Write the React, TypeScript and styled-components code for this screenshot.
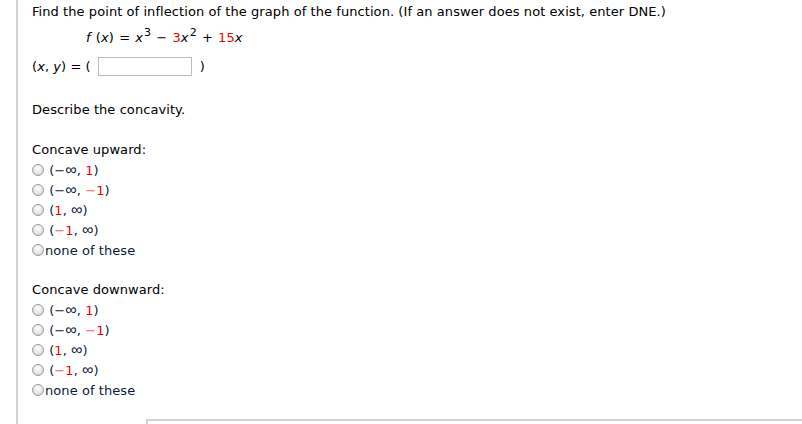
import styled, { createGlobalStyle } from "styled-components";

const Global = createGlobalStyle`
  body {
    margin: 0;
    background: #fff;
    font-family: "DejaVu Sans", Verdana, sans-serif;
    font-size: 13px;
    letter-spacing: 0.07px;
    color: #000;
  }
`;

const Page = styled.div`
  margin-left: 16px;
  border-left: 2px solid #d4d4d4;
  height: 424px;
  padding-left: 14px;
  position: relative;
  overflow: hidden;
`;

const Line = styled.div<{ $top?: number }>`
  line-height: 20px;
  padding-top: ${(p) => p.$top ?? 0}px;
  white-space: nowrap;
`;

const Formula = styled.div`
  padding-left: 54px;
  padding-top: 6px;
  line-height: 20px;
  word-spacing: 1px;
`;

const I = styled.i`
  font-style: italic;
`;

const Red = styled.span<{ $light?: boolean }>`
  color: ${(p) => (p.$light ? "#f06666" : "#e00")};
`;

const Sup = styled.sup`
  font-size: 11px;
  vertical-align: 6px;
  line-height: 0;
  margin-left: 1px;
`;

const AnswerRow = styled.div`
  margin-top: 9px;
  line-height: 20px;
  height: 20px;
  white-space: nowrap;
`;

const Box = styled.input`
  width: 94px;
  height: 19px;
  box-sizing: border-box;
  border: 1px solid #bdbdbd;
  margin: 0 8px 0 7px;
  padding: 0;
  vertical-align: middle;
  position: relative;
  top: -1px;
`;

const Options = styled.div`
  display: flex;
  flex-direction: column;
`;

const Option = styled.label`
  display: flex;
  align-items: center;
  height: 20px;
  color: #0a1a3a;
  white-space: pre;
`;

const Inf = styled.span`
  font-family: "Liberation Sans", Arial, sans-serif;
  font-size: 16px;
  line-height: 0;
`;

const Radio = styled.span`
  width: 12px;
  height: 12px;
  border-radius: 50%;
  border: 1px solid #9a9a9a;
  background: radial-gradient(circle at 50% 35%, #fdfdfd 0%, #e6e6e6 55%, #c9c9c9 100%);
  box-sizing: border-box;
  flex: none;
  margin-right: 1px;
`;

const Bottom = styled.div`
  position: absolute;
  left: 128px;
  right: 0;
  top: 419px;
  height: 20px;
  border-top: 2px solid #cfcfcf;
  border-left: 2px solid #cfcfcf;
`;

const items = [
  <>{" (−"}<Inf>∞</Inf>{", "}<Red>1</Red>{")"}</>,
  <>{" (−"}<Inf>∞</Inf>{", "}<Red $light>−</Red><Red>1</Red>{")"}</>,
  <>{" ("}<Red>1</Red>{", "}<Inf>∞</Inf>{")"}</>,
  <>{" ("}<Red $light>−</Red><Red>1</Red>{", "}<Inf>∞</Inf>{")"}</>,
  <>none of these</>,
];

function Choices({ name }: { name: string }) {
  return (
    <Options>
      {items.map((it, i) => (
        <Option key={name + i}>
          <Radio />
          {it}
        </Option>
      ))}
    </Options>
  );
}

export default function App() {
  return (
    <>
      <Global />
      <Page>
        <Line $top={2}>
          Find the point of inflection of the graph of the function. (If an answer does not exist, enter DNE.)
        </Line>
        <Formula>
          <I>f</I> (<I>x</I>) = <I>x</I>
          <Sup>3</Sup> − <Red>3</Red>
          <I>x</I>
          <Sup>2</Sup> + <Red>15</Red>
          <I>x</I>
        </Formula>
        <AnswerRow>
          (<I>x</I>, <I>y</I>) = (<Box type="text" />)
        </AnswerRow>
        <Line $top={23}>Describe the concavity.</Line>
        <Line $top={20}>Concave upward:</Line>
        <Choices name="up" />
        <Line $top={20}>Concave downward:</Line>
        <Choices name="down" />
        <Bottom />
      </Page>
    </>
  );
}
